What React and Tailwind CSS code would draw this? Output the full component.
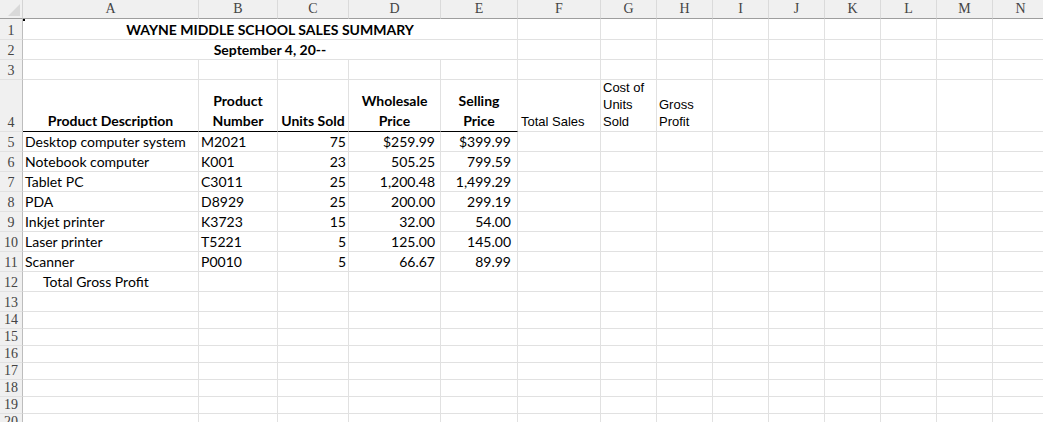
import React from "react";

// larguras das colunas (px), incluindo a borda da direita
const colunas = [
  { k: "A", w: "w-[176px]" },
  { k: "B", w: "w-[79px]" },
  { k: "C", w: "w-[71px]" },
  { k: "D", w: "w-[92px]" },
  { k: "E", w: "w-[77px]" },
  { k: "F", w: "w-[83px]" },
  { k: "G", w: "w-[56px]" },
  { k: "H", w: "w-[56px]" },
  { k: "I", w: "w-[56px]" },
  { k: "J", w: "w-[56px]" },
  { k: "K", w: "w-[56px]" },
  { k: "L", w: "w-[56px]" },
  { k: "M", w: "w-[56px]" },
  { k: "N", w: "w-[56px]" },
];

const produtos = [
  ["Desktop computer system", "M2021", "75", "$259.99", "$399.99"],
  ["Notebook computer", "K001", "23", "505.25", "799.59"],
  ["Tablet PC", "C3011", "25", "1,200.48", "1,499.29"],
  ["PDA", "D8929", "25", "200.00", "299.19"],
  ["Inkjet printer", "K3723", "15", "32.00", "54.00"],
  ["Laser printer", "T5221", "5", "125.00", "145.00"],
  ["Scanner", "P0010", "5", "66.67", "89.99"],
];

const calibri = "font-['Lato',sans-serif] text-[14px] text-black";
const arial = "font-['Liberation_Sans',Arial,sans-serif] text-[13px] leading-[17px] text-black";
const serif = "font-['Liberation_Serif',serif] text-[14px] leading-[16px] text-[#444]";

function NumLinha({ n, h }) {
  return (
    <div className={`${h} w-[23px] shrink-0 bg-[#f0f0f0] border-r border-b border-r-[#bdbdbd] border-b-[#e1e1e1] flex items-end justify-center ${serif}`}>
      {n}
    </div>
  );
}

function Cel({ w, className = "", children }) {
  return (
    <div className={`${w} shrink-0 h-full border-r border-b border-[#e1e1e1] flex overflow-visible whitespace-nowrap ${className}`}>
      {children}
    </div>
  );
}

function Vazias({ from }) {
  return colunas.slice(from).map(c => <Cel key={c.k} w={c.w} />);
}

export default function App() {
  const linhasVazias = [14, 15, 16, 17, 18, 19, 20, 21];

  return (
    <div className="w-[1043px] h-[422px] overflow-hidden bg-white flex flex-col">
      {/* cabeçalho das colunas */}
      <div className="h-[19px] flex shrink-0">
        <div className="w-[23px] shrink-0 bg-[#f0f0f0] border-r border-b border-r-[#d4d4d4] border-b-[#9e9e9e] flex items-end justify-end p-[2px]">
          <svg width="12" height="12" viewBox="0 0 12 12">
            <polygon points="12,0 12,12 0,12" fill="#d9d9d9" />
          </svg>
        </div>
        {colunas.map(c => (
          <div key={c.k} className={`${c.w} shrink-0 bg-[#f0f0f0] border-r border-b border-r-[#dadada] border-b-[#9e9e9e] flex items-center justify-center ${serif}`}>
            {c.k}
          </div>
        ))}
      </div>

      {/* linha 1 */}
      <div className="h-[21px] flex shrink-0">
        <NumLinha n="1" h="h-[21px]" />
        <div className="relative w-[495px] shrink-0 border-r border-b border-[#e1e1e1] flex items-center justify-center font-['Lato',sans-serif] text-[14px] font-bold text-black pt-[1px]">
          <span className="absolute left-0 top-0 w-[2px] h-[2px] bg-black" />
          WAYNE MIDDLE SCHOOL SALES SUMMARY
        </div>
        <Vazias from={5} />
      </div>

      {/* linha 2 */}
      <div className="h-[20px] flex shrink-0">
        <NumLinha n="2" h="h-[20px]" />
        <div className="w-[495px] shrink-0 border-r border-b border-[#e1e1e1] flex items-center justify-center font-['Lato',sans-serif] text-[14px] font-bold text-black">
          September 4, 20--
        </div>
        <Vazias from={5} />
      </div>

      {/* linha 3 */}
      <div className="h-[20px] flex shrink-0">
        <NumLinha n="3" h="h-[20px]" />
        <Vazias from={0} />
      </div>

      {/* linha 4 - títulos */}
      <div className="h-[52px] flex shrink-0">
        <NumLinha n="4" h="h-[52px]" />
        <Cel w="w-[176px]" className={`border-b-black items-end justify-center font-bold leading-[20px] ${calibri}`}>Product Description</Cel>
        <Cel w="w-[79px]" className={`border-b-black items-end justify-center text-center font-bold leading-[20px] ${calibri}`}>
          <span>Product<br />Number</span>
        </Cel>
        <Cel w="w-[71px]" className={`border-b-black items-end justify-center font-bold leading-[20px] ${calibri}`}>Units Sold</Cel>
        <Cel w="w-[92px]" className={`border-b-black items-end justify-center text-center font-bold leading-[20px] ${calibri}`}>
          <span>Wholesale<br />Price</span>
        </Cel>
        <Cel w="w-[77px]" className={`border-b-black items-end justify-center text-center font-bold leading-[20px] ${calibri}`}>
          <span>Selling<br />Price</span>
        </Cel>
        <Cel w="w-[83px]" className={`items-end pl-[3px] pb-[1px] ${arial}`}>Total Sales</Cel>
        <Cel w="w-[56px]" className={`items-end pl-[2px] pb-[1px] ${arial}`}>
          <span>Cost of<br />Units<br />Sold</span>
        </Cel>
        <Cel w="w-[56px]" className={`items-end pl-[2px] pb-[1px] ${arial}`}>
          <span>Gross<br />Profit</span>
        </Cel>
        <Vazias from={8} />
      </div>

      {/* linhas 5 a 11 */}
      {produtos.map((p, i) => (
        <div key={i} className="h-[20px] flex shrink-0">
          <NumLinha n={i + 5} h="h-[20px]" />
          <Cel w="w-[176px]" className={`items-center pl-[2px] ${calibri}`}>{p[0]}</Cel>
          <Cel w="w-[79px]" className={`items-center pl-[2px] ${calibri}`}>{p[1]}</Cel>
          <Cel w="w-[71px]" className={`items-center justify-end pr-[2px] ${calibri}`}>{p[2]}</Cel>
          <Cel w="w-[92px]" className={`items-center justify-end pr-[5px] ${calibri}`}>{p[3]}</Cel>
          <Cel w="w-[77px]" className={`items-center justify-end pr-[6px] ${calibri}`}>{p[4]}</Cel>
          <Vazias from={5} />
        </div>
      ))}

      {/* linha 12 */}
      <div className="h-[20px] flex shrink-0">
        <NumLinha n="12" h="h-[20px]" />
        <Cel w="w-[176px]" className={`items-center pl-[20px] ${calibri}`}>Total Gross Profit</Cel>
        <Vazias from={1} />
      </div>

      {/* linha 13 */}
      <div className="h-[20px] flex shrink-0">
        <NumLinha n="13" h="h-[20px]" />
        <Vazias from={0} />
      </div>

      {linhasVazias.map(n => (
        <div key={n} className="h-[17px] flex shrink-0">
          <NumLinha n={n} h="h-[17px]" />
          <Vazias from={0} />
        </div>
      ))}
    </div>
  );
}
